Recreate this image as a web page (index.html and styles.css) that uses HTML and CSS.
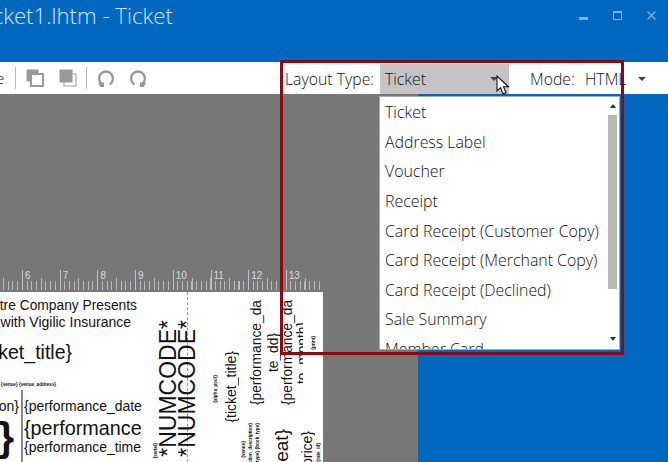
FILE: index.html
```html
<!DOCTYPE html>
<html lang="en">
<head>
<meta charset="utf-8">
<title>Ticket</title>
<link rel="stylesheet" href="styles.css">
</head>
<body>
<div class="window">
  <header class="titlebar">
    <div class="title">Ticket1.lhtm - Ticket</div>
    <div class="winctl">
      <svg width="10" height="10" viewBox="0 0 10 10"><rect x="0" y="6" width="9" height="3" fill="#7fb4de"/></svg>
      <svg width="10" height="10" viewBox="0 0 10 10"><path d="M.5 .5H8.500V8.500H.5Z" fill="none" stroke="#7fb4de"/><rect x="0" y="0" width="9" height="2" fill="#7fb4de"/></svg>
      <svg width="10" height="10" viewBox="0 0 10 10"><path d="M.5 .5L8.500 8.500M8.500 .5L.5 8.500" fill="none" stroke="#7fb4de" stroke-width="1.300"/></svg>
    </div>
  </header>
  <div class="toolbar">
    <span class="clip-label">Save</span>
    <span class="sep"></span>
    <svg class="tool" width="18" height="18" viewBox="0 0 18 18"><rect x="0.5" y="0.5" width="12" height="12" fill="#999"/><rect x="5" y="5" width="12" height="12" fill="#fff" stroke="#999" stroke-width="2"/></svg>
    <svg class="tool" width="18" height="18" viewBox="0 0 18 18"><rect x="5" y="5" width="12" height="12" fill="#fff" stroke="#999"/><rect x="0.5" y="0.5" width="13" height="13" fill="#999"/></svg>
    <span class="sep"></span>
    <svg class="tool" width="18" height="18" viewBox="0 0 18 18"><path d="M5.500 15.500A7 7 0 1 1 12.500 15.500" fill="none" stroke="#999" stroke-width="2.400"/><path d="M1 13.500H7V18H3Z" fill="#999"/></svg>
    <svg class="tool redo" width="18" height="18" viewBox="0 0 18 18"><path d="M5.500 15.500A7 7 0 1 1 12.500 15.500" fill="none" stroke="#999" stroke-width="2.400"/><path d="M11 13.500H17L15 18H11Z" fill="#999"/></svg>
    <div class="options">
      <span class="label layout">Layout Type:</span>
      <div class="select"><span>Ticket</span><i class="caret"></i></div>
      <span class="label mode">Mode:</span>
      <span class="label html">HTML</span>
      <i class="caret mode-caret"></i>
    </div>
  </div>
  <main class="workspace">
    <section class="canvas">
      <div class="ruler">
        <span>6</span><span>7</span><span>8</span><span>9</span><span>10</span><span>11</span><span>12</span><span>13</span>
      </div>
      <div class="ticket">
        <div class="t l1">Theatre Company Presents</div>
        <div class="t l2">with Vigilic Insurance</div>
        <div class="t l3">{ticket_title}</div>
        <div class="t l4">{venue} {venue_address}</div>
        <div class="t l5">{duration}</div>
        <div class="vline"></div>
        <div class="t l6">{performance_date</div>
        <div class="t l7">{performance</div>
        <div class="t l8">{performance_time</div>
        <div class="t l9">}</div>
        <div class="dash"></div>
        <div class="t v code c1">*NUMCODE*</div>
        <div class="t v code c2">*NUMCODE*</div>
        <div class="t v tiny a1">{alpha_pool}</div>
        <div class="t v tt">{ticket_title}</div>
        <div class="t v pd p1">{performance_da<br>te_dd}</div>
        <div class="t v pd p2">{performance_da<br>to_month}</div>
        <div class="t v seat">{seat}</div>
        <div class="t v price">{price}</div>
        <div class="t v tiny a2">{rate_id}</div>
        <div class="t v tiny a3">{print}</div>
        <div class="t v tiny a4">{venue}</div>
        <div class="t v tiny a5">{section_description}</div>
        <div class="t v tiny a6">{type} {book_type}</div>
        <div class="t v tiny a7">{serial}</div>
      </div>
    </section>
    <div class="outer"></div>
  </main>
  <div class="dropdown">
    <ul class="items">
      <li>Ticket</li>
      <li>Address Label</li>
      <li>Voucher</li>
      <li>Receipt</li>
      <li>Card Receipt (Customer Copy)</li>
      <li>Card Receipt (Merchant Copy)</li>
      <li>Card Receipt (Declined)</li>
      <li>Sale Summary</li>
      <li>Member Card</li>
    </ul>
    <div class="scroll">
      <i class="sc-up"></i>
      <b class="thumb"></b>
      <i class="sc-down"></i>
    </div>
  </div>
  <div class="highlight"></div>
  <svg class="cursor" width="14" height="21" viewBox="0 0 14 21"><path d="M1 1V16L4.500 12.800L7 19L10 17.800L7.500 11.800H12.500Z" fill="#fff" stroke="#111" stroke-width="1.100"/></svg>
</div>
</body>
</html>
```

FILE: styles.css
```css
* { box-sizing: border-box; }
html, body { margin: 0; padding: 0; }
body { width: 668px; height: 462px; overflow: hidden; }

.window {
  position: relative;
  width: 668px;
  height: 462px;
  overflow: hidden;
  display: flex;
  flex-direction: column;
  background: #0069bf;
  font-family: "Open Sans", sans-serif;
  font-weight: 300;
  color: #111;
}

.titlebar {
  height: 62px;
  flex: none;
  display: flex;
  justify-content: space-between;
  background: #0069bf;
}
.title {
  margin: 1px 0 0 -24px;
  font-size: 22.200px;
  line-height: 30px;
  color: #d5e7f5;
  white-space: nowrap;
}
.winctl {
  display: flex;
  gap: 24px;
  padding: 11px 11px 0 0;
}

.toolbar {
  height: 32px;
  flex: none;
  display: flex;
  align-items: center;
  background: #fff;
  position: relative;
}
.clip-label {
  font-size: 15px;
  margin-left: -27px;
  width: 36px;
  margin-right: 6px;
  white-space: nowrap;
}
.sep { width: 1px; height: 22px; background: #bbb; }
.tool { margin-left: 15px; }
.sep + .tool { margin-left: 10px; }
.tool + .sep { margin-left: 9px; }
.redo { margin-left: 14px; }

.options {
  position: absolute;
  left: 285px;
  top: 2px;
  height: 30px;
  display: flex;
  align-items: center;
  font-size: 15.800px;
}
.label { white-space: nowrap; }
.layout { width: 95px; }
.select {
  width: 129px;
  height: 30px;
  padding-left: 5px;
  display: flex;
  align-items: center;
  justify-content: space-between;
  background: #c4c4c4;
}
.caret {
  width: 0;
  height: 0;
  border-left: 4px solid transparent;
  border-right: 4px solid transparent;
  border-top: 4px solid #444;
  margin-right: 11px;
}
.mode { margin-left: 21px; width: 55px; }
.html { width: 53px; }

.workspace { flex: 1; display: flex; min-height: 0; }
.canvas {
  width: 418px;
  flex: none;
  background: #777;
  padding-top: 176px;
  display: flex;
  flex-direction: column;
}
.outer { flex: 1; background: #0069bf; }

.ruler {
  height: 22px;
  width: 323px;
  flex: none;
  display: flex;
  padding-left: 22px;
  background-image:
    repeating-linear-gradient(90deg, #c4c4c4 0 1px, transparent 1px 37.700px),
    repeating-linear-gradient(90deg, #bbb 0 1px, transparent 1px 18.850px),
    repeating-linear-gradient(90deg, #bbb 0 1px, transparent 1px 4.710px);
  background-size: 100% 20px, 100% 12px, 100% 9px;
  background-position: 22px 0, 3px 8px, 3px 11px;
  background-repeat: no-repeat;
}
.ruler span {
  width: 37.700px;
  flex: none;
  padding: 0 0 0 3px;
  font-family: "Liberation Sans", sans-serif;
  font-weight: 400;
  font-size: 10px;
  line-height: 12px;
  color: #ddd;
}

.ticket {
  position: relative;
  width: 323px;
  flex: 1;
  background: #fff;
  overflow: hidden;
  font-family: "Liberation Sans", sans-serif;
  font-weight: 400;
  color: #111;
}
.t { position: absolute; white-space: nowrap; }
.l1 { right: 186px; top: 6px; font-size: 13.800px; line-height: 16px; }
.l2 { right: 192px; top: 22px; font-size: 14px; line-height: 16px; }
.l3 { right: 251px; top: 47px; font-size: 19.500px; line-height: 26px; }
.l4 { right: 267px; top: 90px; font-size: 4.600px; line-height: 5px; font-weight: 700; }
.l5 { right: 304px; top: 105px; font-size: 14px; line-height: 18px; }
.vline { position: absolute; left: 21px; top: 98px; width: 2px; bottom: 0; background: #888; }
.l6 { left: 24px; top: 105px; font-size: 13.950px; line-height: 18px; }
.l7 { left: 24px; top: 123px; font-size: 19.800px; line-height: 26px; }
.l8 { left: 24px; top: 146px; font-size: 13.950px; line-height: 18px; }
.l9 { right: 309px; top: 122px; font-size: 40px; line-height: 46px; font-weight: 700; }
.dash { position: absolute; left: 187px; top: 0; bottom: 0; border-left: 1px dashed #999; }

.v { writing-mode: vertical-rl; transform: rotate(180deg); }
.code { font-size: 23px; line-height: 18px; bottom: 5px; }
.c1 { left: 159px; }
.c2 { left: 178px; }
.tiny { font-size: 4.600px; line-height: 5px; font-weight: 700; }
.a1 { left: 213px; bottom: 59px; }
.tt { left: 223px; bottom: 39px; font-size: 14px; line-height: 16px; }
.pd { font-size: 13.800px; line-height: 17px; text-align: center; }
.p1 { left: 248px; bottom: 57px; }
.p2 { left: 280px; bottom: 57px; width: 23px; line-height: 15px; overflow: hidden; }
.seat { left: 272px; bottom: -16px; font-size: 19px; line-height: 20px; }
.price { left: 301px; bottom: -9px; font-size: 14px; line-height: 12px; }
.a2 { left: 316px; bottom: 0; }
.a3 { left: 311px; bottom: 112px; }
.a4 { left: 241px; bottom: 4px; }
.a5 { left: 248px; bottom: -8px; }
.a6 { left: 255px; bottom: -2px; }
.a7 { left: 153px; bottom: 3px; }

.dropdown {
  position: absolute;
  left: 379px;
  top: 96px;
  width: 241px;
  height: 254px;
  background: #fff;
  border: 1px solid #a9a9a9;
  overflow: hidden;
  display: flex;
}
.items {
  list-style: none;
  margin: 0;
  padding: 0 0 0 5px;
  flex: 1;
  font-size: 15.900px;
}
.items li { height: 29.650px; line-height: 30px; white-space: nowrap; }
.scroll {
  width: 11px;
  margin-right: 1px;
  display: flex;
  flex-direction: column;
  align-items: center;
  padding-top: 7px;
}
.sc-up, .sc-down { width: 0; height: 0; border-left: 3px solid transparent; border-right: 3px solid transparent; }
.sc-up { border-bottom: 4px solid #333; }
.sc-down { border-top: 4px solid #333; margin-top: 48px; }
.thumb { width: 9px; height: 174px; margin-top: 7px; background: #b8b8b8; }

.highlight {
  position: absolute;
  left: 280px;
  top: 60px;
  width: 344px;
  height: 295px;
  border: 3px solid #8b0a14;
  pointer-events: none;
}
.cursor { position: absolute; left: 496px; top: 75px; }
```
